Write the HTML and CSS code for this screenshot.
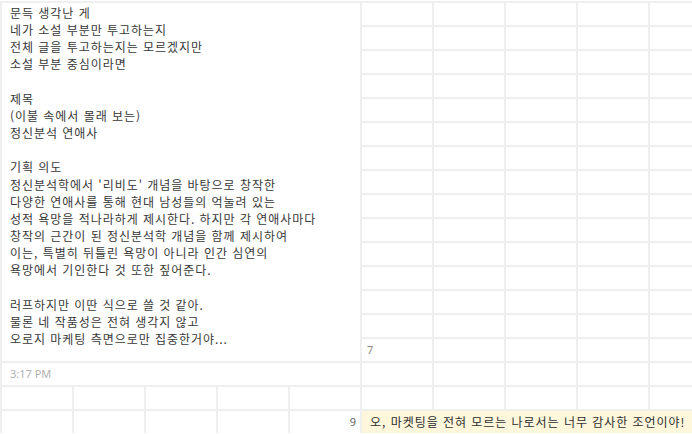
FILE: index.html
```html
<!DOCTYPE html>
<html lang="ko">
<head>
<meta charset="utf-8">
<title>Sheet</title>
<link rel="stylesheet" href="styles.css">
</head>
<body>
<div class="sheet">
  <div class="cell note">문득 생각난 게
네가 소설 부분만 투고하는지
전체 글을 투고하는지는 모르겠지만
소설 부분 중심이라면

제목
(이불 속에서 몰래 보는)
정신분석 연애사

기획 의도
정신분석학에서 '리비도' 개념을 바탕으로 창작한
다양한 연애사를 통해 현대 남성들의 억눌려 있는
성적 욕망을 적나라하게 제시한다. 하지만 각 연애사마다
창작의 근간이 된 정신분석학 개념을 함께 제시하여
이는, 특별히 뒤틀린 욕망이 아니라 인간 심연의
욕망에서 기인한다 것 또한 짚어준다.

러프하지만 이딴 식으로 쓸 것 같아.
물론 네 작품성은 전혀 생각지 않고
오로지 마케팅 측면으로만 집중한거야...</div>
  <div class="cell"></div><div class="cell"></div><div class="cell"></div><div class="cell"></div><div class="cell"></div>
  <div class="cell"></div><div class="cell"></div><div class="cell"></div><div class="cell"></div><div class="cell"></div>
  <div class="cell"></div><div class="cell"></div><div class="cell"></div><div class="cell"></div><div class="cell"></div>
  <div class="cell"></div><div class="cell"></div><div class="cell"></div><div class="cell"></div><div class="cell"></div>
  <div class="cell"></div><div class="cell"></div><div class="cell"></div><div class="cell"></div><div class="cell"></div>
  <div class="cell"></div><div class="cell"></div><div class="cell"></div><div class="cell"></div><div class="cell"></div>
  <div class="cell"></div><div class="cell"></div><div class="cell"></div><div class="cell"></div><div class="cell"></div>
  <div class="cell"></div><div class="cell"></div><div class="cell"></div><div class="cell"></div><div class="cell"></div>
  <div class="cell"></div><div class="cell"></div><div class="cell"></div><div class="cell"></div><div class="cell"></div>
  <div class="cell"></div><div class="cell"></div><div class="cell"></div><div class="cell"></div><div class="cell"></div>
  <div class="cell"></div><div class="cell"></div><div class="cell"></div><div class="cell"></div><div class="cell"></div>
  <div class="cell"></div><div class="cell"></div><div class="cell"></div><div class="cell"></div><div class="cell"></div>
  <div class="cell"></div><div class="cell"></div><div class="cell"></div><div class="cell"></div><div class="cell"></div>
  <div class="cell"></div><div class="cell"></div><div class="cell"></div><div class="cell"></div><div class="cell"></div>
  <div class="cell num">7</div><div class="cell"></div><div class="cell"></div><div class="cell"></div><div class="cell"></div>

  <div class="cell time">3:17 PM</div>
  <div class="cell"></div><div class="cell"></div><div class="cell"></div><div class="cell"></div><div class="cell"></div>

  <div class="cell"></div><div class="cell"></div><div class="cell"></div><div class="cell"></div><div class="cell"></div>
  <div class="cell"></div><div class="cell"></div><div class="cell"></div><div class="cell"></div><div class="cell"></div>

  <div class="cell"></div><div class="cell"></div><div class="cell"></div><div class="cell"></div><div class="cell num right">9</div>
  <div class="cell reply">오, 마켓팅을 전혀 모르는 나로서는 너무 감사한 조언이야!</div>
</div>
</body>
</html>
```
FILE: styles.css
```css
html, body {
  margin: 0;
  padding: 0;
  background: #ffffff;
  overflow: hidden;
}

body {
  width: 692px;
  height: 434px;
}

.sheet {
  box-sizing: border-box;
  width: 692px;
  margin-top: 1px;
  padding: 2px 0 0 2px;
  display: grid;
  grid-template-columns: repeat(9, 70px) 1fr;
  grid-auto-rows: 22px;
  gap: 2px;
  background: #efefef;
  font-family: "Noto Sans CJK KR", sans-serif;
  font-size: 12px;
  color: #333333;
}

.cell {
  background: #ffffff;
  overflow: hidden;
  white-space: nowrap;
}

.note {
  grid-column: span 5;
  grid-row: span 15;
  white-space: pre-line;
  padding: 1px 0 0 8px;
  line-height: 17.16px;
  letter-spacing: 0.96px;
  color: #383838;
}

.num {
  font-family: "Noto Sans", sans-serif;
  font-size: 11px;
  color: #888888;
  line-height: 22px;
  padding-left: 5px;
}

.num.right {
  text-align: right;
  padding: 0 4px 0 0;
  color: #666666;
}

.time {
  grid-column: span 5;
  font-family: "Noto Sans", sans-serif;
  font-size: 11px;
  color: #b0b0b0;
  line-height: 22px;
  padding-left: 8px;
}

.reply {
  grid-column: span 5;
  background: #fef7dc;
  line-height: 22px;
  padding-left: 8px;
  letter-spacing: 0.96px;
  color: #2e2e2e;
}
```
